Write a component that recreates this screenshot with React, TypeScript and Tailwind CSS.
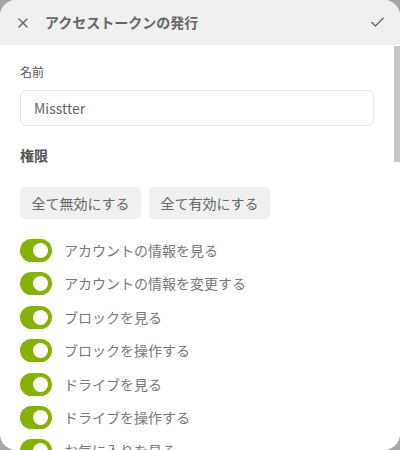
import { X, Check } from "lucide-react";

const perms = [
  "アカウントの情報を見る",
  "アカウントの情報を変更する",
  "ブロックを見る",
  "ブロックを操作する",
  "ドライブを見る",
  "ドライブを操作する",
  "お気に入りを見る",
  "お気に入りを操作する",
];

function Toggle() {
  return (
    <div className="w-[32px] h-[23px] rounded-full bg-[#86b300] flex items-center justify-end pr-[4px] shrink-0">
      <div className="w-[15px] h-[15px] rounded-full bg-white" />
    </div>
  );
}

export default function App() {
  return (
    <div
      className="w-[400px] h-[450px] bg-[#a6a6a6] overflow-hidden"
      style={{ fontFamily: '"Noto Sans CJK JP", "Noto Sans", sans-serif' }}
    >
      <div className="relative w-[400px] h-[450px] bg-white rounded-[16px] overflow-hidden flex flex-col">
        {/* Header */}
        <div className="h-[45px] bg-[#f0f0f0] flex items-center shrink-0">
          <div className="w-[45px] flex justify-center">
            <X className="w-[16px] h-[16px] text-[#666]" strokeWidth={2} />
          </div>
          <div className="flex-1 text-[14px] font-bold text-[#666]">アクセストークンの発行</div>
          <div className="w-[45px] flex justify-center">
            <Check className="w-[17px] h-[17px] text-[#666]" strokeWidth={2} />
          </div>
        </div>

        {/* Body */}
        <div className="flex-1 overflow-hidden pl-[20px] pr-[26px] pt-[18px]">
          <div className="text-[12px] text-[#555] leading-[18px]">名前</div>
          <div className="mt-[9px] h-[36px] border border-[#e6e6e6] rounded-[6px] flex items-center px-[13px] text-[14px] text-[#666]">
            Misstter
          </div>

          <div className="mt-[19px] text-[14px] font-bold text-[#555] leading-[20px]">権限</div>

          <div className="mt-[22px] flex gap-[8px]">
            <button className="h-[32px] w-[121px] bg-[#f0f0f0] rounded-[5px] text-[14px] text-[#666]">
              全て無効にする
            </button>
            <button className="h-[32px] w-[121px] bg-[#f0f0f0] rounded-[5px] text-[14px] text-[#666]">
              全て有効にする
            </button>
          </div>

          <div className="mt-[20px] flex flex-col gap-[10.4px]">
            {perms.map((p) => (
              <div key={p} className="flex items-center gap-[12px] h-[23px]">
                <Toggle />
                <span className="text-[14px] text-[#777]">{p}</span>
              </div>
            ))}
          </div>
        </div>

        {/* scrollbar thumb */}
        <div className="absolute right-0 top-[46px] w-[6px] h-[116px] bg-[#c7c7c7]" />
      </div>
    </div>
  );
}
